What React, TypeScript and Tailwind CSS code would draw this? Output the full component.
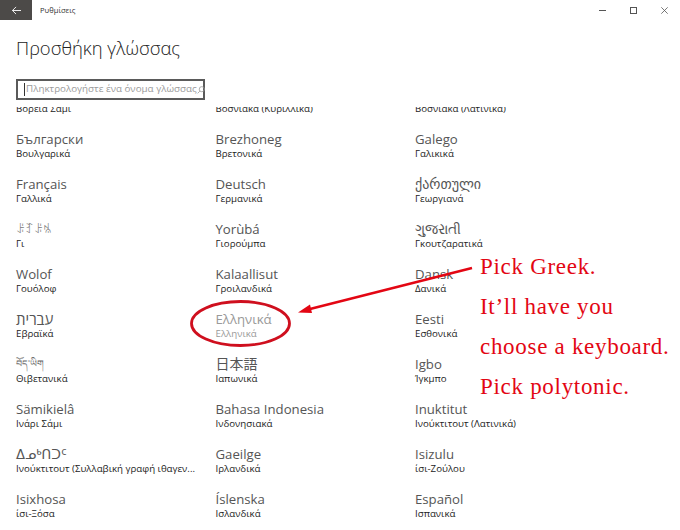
import React from "react";

type L = { t?: string; s: string; g?: boolean; tc?: string };
const rows: L[][] = [
  [{ s: "Βόρεια Σάμι" }, { s: "Βοσνιακά (Κυριλλικά)" }, { s: "Βοσνιακά (Λατινικά)" }],
  [{ t: "Български", s: "Βουλγαρικά" }, { t: "Brezhoneg", s: "Βρετονικά" }, { t: "Galego", s: "Γαλικικά" }],
  [{ t: "Français", s: "Γαλλικά" }, { t: "Deutsch", s: "Γερμανικά" }, { t: "ქართული", s: "Γεωργιανά", tc: "text-[14px]" }],
  [{ t: "ꌠꆈꌠꁱ", s: "Γι", tc: "text-[11.5px] text-[#777]" }, { t: "Yorùbá", s: "Γιορούμπα" }, { t: "ગુજરાતી", s: "Γκουτζαρατικά", tc: "text-[14px]" }],
  [{ t: "Wolof", s: "Γουόλοφ" }, { t: "Kalaallisut", s: "Γροιλανδικά" }, { t: "Dansk", s: "Δανικά" }],
  [{ t: "עברית", s: "Εβραϊκά", tc: "text-[15px]" }, { t: "Ελληνικά", s: "Ελληνικά", g: true }, { t: "Eesti", s: "Εσθονικά" }],
  [{ t: "བོད་ཡིག", s: "Θιβετανικά", tc: "text-[9.5px] text-[#666]" }, { t: "日本語", s: "Ιαπωνικά", tc: "text-[14px]" }, { t: "Igbo", s: "Ίγκμπο" }],
  [{ t: "Sämikielâ", s: "Ινάρι Σάμι" }, { t: "Bahasa Indonesia", s: "Ινδονησιακά" }, { t: "Inuktitut", s: "Ινούκτιτουτ (Λατινικά)" }],
  [{ t: "ᐃᓄᒃᑎᑐᑦ", s: "Ινούκτιτουτ (Συλλαβική γραφή ιθαγεν..." }, { t: "Gaeilge", s: "Ιρλανδικά" }, { t: "Isizulu", s: "ίσι-Ζούλου" }],
  [{ t: "Isixhosa", s: "ίσι-Ξόσα" }, { t: "Íslenska", s: "Ισλανδικά" }, { t: "Español", s: "Ισπανικά" }],
];

function Cell({ l }: { l: L }) {
  return (
    <div className="h-[45px] flex flex-col justify-end pb-[13px] min-w-0">
      {l.t && (
        <div className={`leading-[16px] h-[16px] whitespace-nowrap ${l.g ? "text-[#999]" : "text-[#555]"} ${l.tc ?? "text-[13.2px]"}`}>
          {l.t}
        </div>
      )}
      <div className={`text-[9.7px] leading-[14px] h-[14px] whitespace-nowrap ${l.g ? "text-[#999]" : "text-[#222]"}`}>
        {l.s}
      </div>
    </div>
  );
}

const notes = ["Pick Greek.", "It’ll have you", "choose a keyboard.", "Pick polytonic."];

export default function App() {
  return (
    <div className="relative w-[680px] h-[530px] overflow-hidden bg-white flex flex-col font-['Open_Sans','Noto_Sans','DejaVu_Sans','Noto_Sans_CJK_JP',sans-serif]">
      <div className="flex items-start h-[34px] shrink-0">
        <div className="w-[32px] h-[20px] bg-[#4c4a48] flex items-center justify-center">
          <svg width="9" height="9" viewBox="0 0 10 10" fill="none" stroke="#fff" strokeWidth="1">
            <path d="M0.5 5H10M4.5 1L0.5 5L4.5 9" />
          </svg>
        </div>
        <div className="ml-2 text-[7.6px] leading-[20px] text-[#333]">Ρυθμίσεις</div>
        <div className="ml-auto flex items-center h-[20px]">
          <svg width="7" height="7" viewBox="0 0 7 7" className="mr-[24px]">
            <path d="M0 3.5H7" stroke="#555" strokeWidth="1" />
          </svg>
          <svg width="7" height="7" viewBox="0 0 7 7" className="mr-[24px]">
            <rect x="0.5" y="0.5" width="6" height="6" fill="none" stroke="#555" />
          </svg>
          <svg width="7" height="7" viewBox="0 0 7 7" className="mr-[12px]">
            <path d="M0.3 0.3L6.7 6.7M6.7 0.3L0.3 6.7" stroke="#555" strokeWidth="0.8" />
          </svg>
        </div>
      </div>
      <div className="pl-[16px] text-[18.4px] leading-[28px] font-light text-[#222] shrink-0">Προσθήκη γλώσσας</div>
      <div className="ml-[16px] mt-[17px] w-[189px] h-[21px] shrink-0 border-2 border-[#5a5a5a] flex items-center pl-[6px] pr-[2px] text-[9.8px] text-[#9a9a9a] whitespace-nowrap">
        <span className="w-px h-[13px] bg-[#333] mr-px shrink-0" />
        <span>Πληκτρολογήστε ένα όνομα γλώσσας</span>
        <svg width="8" height="8" viewBox="0 0 10 10" className="ml-auto shrink-0" fill="none" stroke="#999">
          <circle cx="6" cy="4" r="3.2" />
          <path d="M3.6 6.4L0.8 9.2" />
        </svg>
      </div>
      <div className="flex-1 min-h-0 overflow-hidden mt-[7px]">
        <div className="-mt-[23px] pl-[16px] grid grid-cols-[199.5px_199.5px_1fr]">
          {rows.flat().map((l, i) => (
            <Cell key={i} l={l} />
          ))}
        </div>
      </div>

      <svg className="absolute left-0 top-0 pointer-events-none" width="680" height="530" viewBox="0 0 680 530" fill="none">
        <ellipse cx="240.5" cy="323.5" rx="49" ry="22" stroke="#cf0f1e" strokeWidth="2.8" />
        <path d="M472 268L306 310" stroke="#e30613" strokeWidth="2.4" />
        <path d="M298 312.5L310 304.5L312 313Z" fill="#e30613" />
      </svg>
      <div className="absolute left-[480px] top-[247px] flex flex-col font-['Liberation_Serif',serif] text-[#e30613] text-[23px] leading-[40px] tracking-[0.7px] whitespace-nowrap">
        {notes.map((n) => (
          <div key={n}>{n}</div>
        ))}
      </div>
    </div>
  );
}
